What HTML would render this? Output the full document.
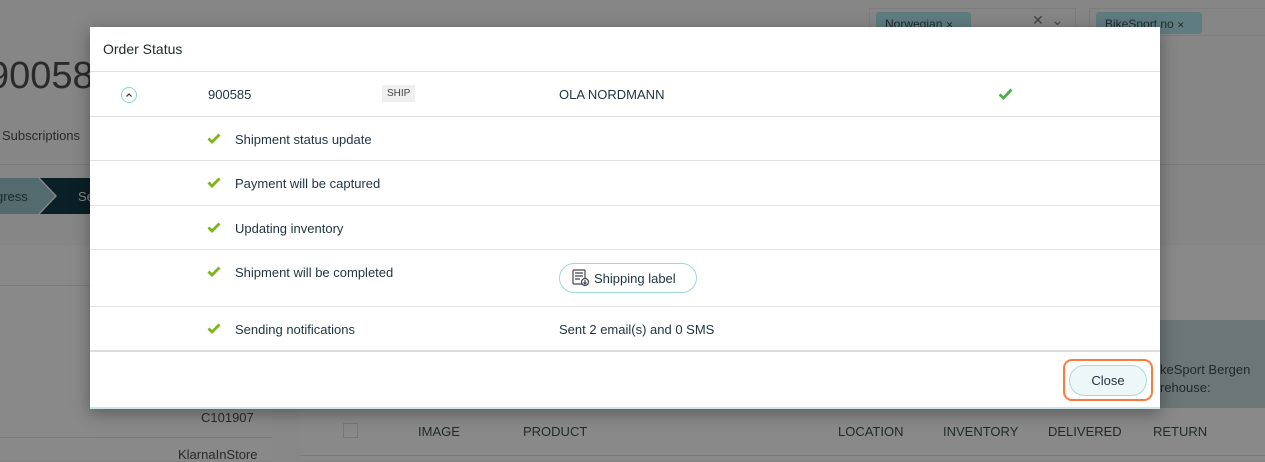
<!DOCTYPE html>
<html><head><style>
*{box-sizing:border-box;margin:0;padding:0}
body{width:1265px;height:460px;overflow:hidden;background:#878787;font-family:"Liberation Sans",sans-serif;position:relative;color:#1e3440}
.a{position:absolute}
.modal{left:90px;top:27px;width:1070px;height:382px;background:#fff;box-shadow:0 4px 16px rgba(0,0,0,.35);border-bottom:2px solid #cfe6e6}
.row{position:absolute;left:0;width:1070px;border-top:1px solid #e2e2e2;font-size:13px}
.ck{position:absolute;left:117px;width:14px;height:11px}
.lbl{position:absolute;left:145px}
</style></head><body>
<!-- background page -->
<div class="a" style="left:0;top:245px;width:272px;height:215px;background:#898989"></div>
<div class="a" style="left:300px;top:245px;width:965px;height:215px;background:#898989"></div>
<div class="a" style="left:0;top:0;width:1265px;height:245px;background:#868686"></div>
<div class="a" style="left:0;top:164px;width:1265px;height:1px;background:#7a7a7a"></div>
<div class="a" style="left:0;top:285px;width:272px;height:1px;background:#7a7a7a"></div>
<div class="a" style="left:0;top:437px;width:272px;height:1px;background:#7a7a7a"></div>
<div class="a" style="left:-12px;top:55px;font-size:38px;color:#2a2a2a">900585</div>
<div class="a" style="left:2px;top:128px;font-size:13px;color:#2a2a2a">Subscriptions</div>
<div class="a" style="left:0;top:178px;width:55px;height:36px;background:#536b6e;clip-path:polygon(0 0,38px 0,55px 18px,38px 36px,0 36px)"></div>
<div class="a" style="left:-4px;top:189px;font-size:13px;color:#1a2a2a">gress</div>
<div class="a" style="left:40px;top:178px;width:60px;height:36px;background:#0a1f26;clip-path:polygon(0 0,60px 0,60px 36px,0 36px,17px 18px)"></div>
<div class="a" style="left:78px;top:189px;font-size:13px;color:#888">Se</div>
<div class="a" style="left:201px;top:410px;font-size:13px;color:#2a2a2a">C101907</div>
<div class="a" style="left:178px;top:447px;font-size:13px;color:#2a2a2a">KlarnaInStore</div>
<div class="a" style="left:1160px;top:320px;width:105px;height:88px;background:#6c7676"></div>
<div class="a" style="left:1160px;top:362px;font-size:13px;color:#1e2a2a">keSport Bergen</div>
<div class="a" style="left:1160px;top:380px;font-size:13px;color:#1e2a2a">rehouse:</div>
<div class="a" style="left:343px;top:423px;width:15px;height:15px;border:1px solid #777"></div>
<div class="a" style="left:418px;top:424px;font-size:13px;color:#1e2a2a">IMAGE</div>
<div class="a" style="left:523px;top:424px;font-size:13px;color:#1e2a2a">PRODUCT</div>
<div class="a" style="left:838px;top:424px;font-size:13px;color:#1e2a2a">LOCATION</div>
<div class="a" style="left:943px;top:424px;font-size:13px;color:#1e2a2a">INVENTORY</div>
<div class="a" style="left:1048px;top:424px;font-size:13px;color:#1e2a2a">DELIVERED</div>
<div class="a" style="left:1153px;top:424px;font-size:13px;color:#1e2a2a">RETURN</div>
<div class="a" style="left:300px;top:455px;width:965px;height:1px;background:#7a7a7a"></div>
<div class="a" style="left:869px;top:8px;width:207px;height:28px;border:1px solid #7d7d7d"></div>
<div class="a" style="left:876px;top:12px;width:95px;height:22px;background:#5f7c80;border-radius:3px;font-size:12px;padding:5px 9px;color:#1e2a2a;white-space:nowrap">Norwegian <span style="font-size:9px">✕</span></div>
<div class="a" style="left:1032px;top:12px;font-size:14px;color:#444">✕ &nbsp;⌄</div>
<div class="a" style="left:1089px;top:8px;width:180px;height:28px;border:1px solid #7d7d7d"></div>
<div class="a" style="left:1096px;top:12px;width:106px;height:22px;background:#5f7c80;border-radius:3px;font-size:12px;padding:5px 9px;color:#1e2a2a;white-space:nowrap">BikeSport.no <span style="font-size:9px">✕</span></div>

<div class="a modal">
  <div class="a" style="left:13px;top:14px;font-size:14px;color:#1e2a2a">Order Status</div>
  <div class="row" style="top:44px;height:45px">
    <div class="a" style="left:31px;top:15px;width:16px;height:16px;border:1px solid #8fd0d4;border-radius:50%"></div>
    <svg class="a" style="left:35px;top:19px" width="8" height="8" viewBox="0 0 8 8"><path d="M1.5 5.5L4 3L6.5 5.5" stroke="#333" stroke-width="1.2" fill="none"/></svg>
    <div class="a" style="left:118px;top:15px">900585</div>
    <div class="a" style="left:292px;top:13px;background:#efefef;font-size:10px;padding:3px 5px;color:#444">SHIP</div>
    <div class="a" style="left:469px;top:15px">OLA NORDMANN</div>
    <svg class="a" style="left:908px;top:16px" width="15" height="12" viewBox="0 0 15 12"><path d="M1.5 6.5L5.5 10L13.5 1.5" stroke="#4caf50" stroke-width="2.8" fill="none"/></svg>
  </div>
  <div class="row" style="top:89px;height:44px"><svg class="ck" style="top:16px" viewBox="0 0 14 11"><path d="M1.5 5.5L5 9L12.5 1.5" stroke="#7cb518" stroke-width="2.8" fill="none"/></svg><div class="lbl" style="top:15px">Shipment status update</div></div>
  <div class="row" style="top:133px;height:45px"><svg class="ck" style="top:16px" viewBox="0 0 14 11"><path d="M1.5 5.5L5 9L12.5 1.5" stroke="#7cb518" stroke-width="2.8" fill="none"/></svg><div class="lbl" style="top:15px">Payment will be captured</div></div>
  <div class="row" style="top:178px;height:44px"><svg class="ck" style="top:16px" viewBox="0 0 14 11"><path d="M1.5 5.5L5 9L12.5 1.5" stroke="#7cb518" stroke-width="2.8" fill="none"/></svg><div class="lbl" style="top:15px">Updating inventory</div></div>
  <div class="row" style="top:222px;height:57px"><svg class="ck" style="top:16px" viewBox="0 0 14 11"><path d="M1.5 5.5L5 9L12.5 1.5" stroke="#7cb518" stroke-width="2.8" fill="none"/></svg><div class="lbl" style="top:15px">Shipment will be completed</div>
    <div class="a" style="left:469px;top:13px;width:138px;height:30px;border:1px solid #9fd6d8;border-radius:15px;padding:7px 0 0 34px">Shipping label</div>
    <svg class="a" style="left:482px;top:19px" width="18" height="18" viewBox="0 0 18 18" fill="none" stroke="#445" stroke-width="1.2"><rect x="1" y="1" width="12" height="14" rx="1"/><path d="M3 4h8M3 7h8M3 10h5"/><circle cx="13" cy="13" r="3.5" fill="#fff"/><path d="M13 11v4M11.5 13.5L13 15l1.5-1.5"/></svg>
  </div>
  <div class="row" style="top:279px;height:44px"><svg class="ck" style="top:16px" viewBox="0 0 14 11"><path d="M1.5 5.5L5 9L12.5 1.5" stroke="#7cb518" stroke-width="2.8" fill="none"/></svg><div class="lbl" style="top:15px">Sending notifications</div><div class="a" style="left:469px;top:15px">Sent 2 email(s) and 0 SMS</div></div>
  <div class="row" style="top:323px;height:1px;border-top:2px solid #ddd"></div>
  <div class="a" style="left:973px;top:332px;width:90px;height:42px;border:2px solid #ff7a3d;border-radius:9px"></div>
  <div class="a" style="left:979px;top:338px;width:78px;height:31px;border:1px solid #a6dcdc;border-radius:16px;background:#eef7f7;font-size:13px;text-align:center;line-height:29px">Close</div>
</div>
</body></html>
